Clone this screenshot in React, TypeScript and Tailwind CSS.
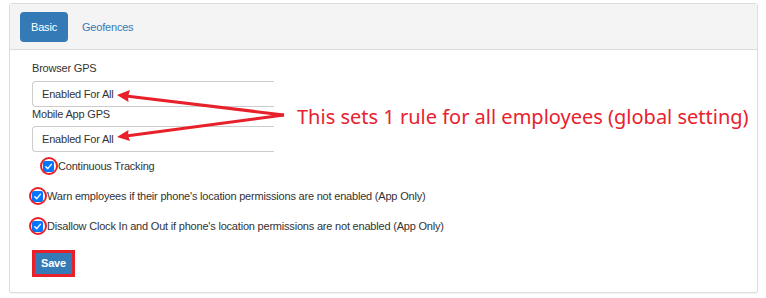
import React from "react";

function Check({ ml }: { ml: string }) {
  return (
    <span className={`relative inline-flex h-[11px] w-[11px] shrink-0 items-center justify-center rounded-[2px] bg-[#0075ff] ${ml}`}>
      <svg width="9" height="9" viewBox="0 0 10 10">
        <path d="M2 5.2 L4.2 7.4 L8.2 2.6" stroke="white" strokeWidth="1.6" fill="none" strokeLinecap="round" strokeLinejoin="round" />
      </svg>
      <span className="absolute -inset-[3.5px] rounded-full border-[2.5px] border-[#e8202a]" />
    </span>
  );
}

function SelectBox() {
  return (
    <div className="flex h-[26px] w-[242px] items-center rounded-l-[4px] border-y border-l border-[#cccccc] bg-white pl-[9px] text-[11px] tracking-[-0.2px] text-[#333]">
      Enabled For All
    </div>
  );
}

export default function App() {
  return (
    <div className="relative h-[298px] w-[766px] bg-white" style={{ fontFamily: '"Liberation Sans", Arial, sans-serif' }}>
      <div className="ml-[9px] pt-[3px]">
        <div className="h-[290px] w-[749px] rounded-[3px] border border-[#dddddd] bg-white shadow-[0_1px_1px_rgba(0,0,0,0.05)]">
          <div className="flex h-[46px] items-start gap-[14px] border-b border-[#dddddd] bg-[#f4f4f4] pl-[10px] pt-[8px] text-[11px] tracking-[-0.2px]">
            <div className="flex h-[30px] w-[48px] items-center justify-center rounded-[4px] bg-[#337ab7] text-white">
              Basic
            </div>
            <div className="flex h-[30px] items-center text-[#337ab7]">Geofences</div>
          </div>
          <div className="flex flex-col pl-[22px] pt-[11px] text-[11px] tracking-[-0.2px] text-[#333]">
            <div className="h-[15px] leading-[15px]">Browser GPS</div>
            <div className="mt-[5px]"><SelectBox /></div>
            <div className="h-[14px] leading-[14px]">Mobile App GPS</div>
            <div className="mt-[5px]"><SelectBox /></div>
            <div className="mt-[7px] flex h-[14px] items-center">
              <Check ml="ml-[11px]" />
              <span className="ml-[4px]">Continuous Tracking</span>
            </div>
            <div className="mt-[16px] flex h-[14px] items-center">
              <Check ml="ml-0" />
              <span className="ml-[4px]">Warn employees if their phone's location permissions are not enabled (App Only)</span>
            </div>
            <div className="mt-[16px] flex h-[14px] items-center">
              <Check ml="ml-0" />
              <span className="ml-[4px]">Disallow Clock In and Out if phone's location permissions are not enabled (App Only)</span>
            </div>
            <div className="mt-[17px] flex">
              <div className="flex h-[27px] w-[43px] items-center justify-center border-[3px] border-[#e8202a] bg-[#337ab7] font-bold text-white">
                Save
              </div>
            </div>
          </div>
        </div>
      </div>

      <div
        className="absolute left-[297px] top-[104px] whitespace-nowrap text-[20px] leading-[26px] text-[#e8212e]"
        style={{ fontFamily: '"Noto Sans", "Open Sans", sans-serif' }}
      >
        This sets 1 rule for all employees (global setting)
      </div>

      <svg className="pointer-events-none absolute left-0 top-0" width="766" height="298">
        <line x1="284" y1="115" x2="126" y2="96" stroke="#e8202a" strokeWidth="3" />
        <line x1="284" y1="115" x2="126" y2="136" stroke="#e8202a" strokeWidth="3" />
        <polygon points="117,95 130,90 128,96.4 128.5,102" fill="#e8202a" />
        <polygon points="117,137 128.5,130 128,135.4 130,141" fill="#e8202a" />
      </svg>
    </div>
  );
}
